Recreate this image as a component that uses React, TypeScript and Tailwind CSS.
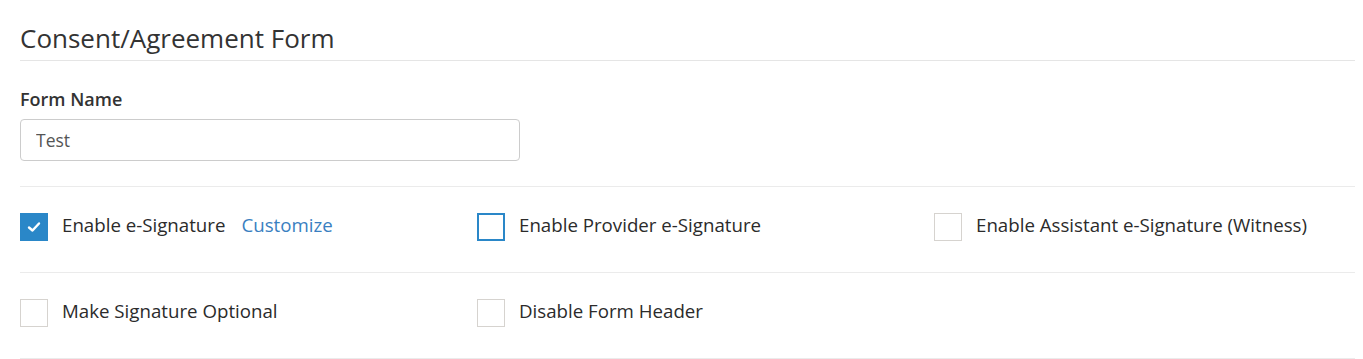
import React from 'react';

interface CheckProps {
  label: string;
  checked?: boolean;
  focused?: boolean;
  extra?: React.ReactNode;
}

const Check: React.FC<CheckProps> = ({ label, checked, focused, extra }) => {
  let box = 'border border-[#d6d3cf] bg-white';
  if (checked) box = 'bg-[#2a87c8] border border-[#2a87c8]';
  else if (focused) box = 'border-2 border-[#2a87c8] bg-white';

  return (
    <div className="w-[457px] shrink-0 flex items-start">
      <span className={`w-[28px] h-[28px] shrink-0 flex items-center justify-center ${box}`}>
        {checked && (
          <svg width="14" height="12" viewBox="0 0 14 12" fill="none">
            <path d="M2 6.5 L5.5 9.5 L12 2.5" stroke="white" strokeWidth="2.4" strokeLinecap="round" strokeLinejoin="round" />
          </svg>
        )}
      </span>
      <span className="ml-[14px] text-[18.7px] leading-[24px] text-[#2b2b2b] whitespace-nowrap">{label}</span>
      {extra}
    </div>
  );
};

export default function App() {
  return (
    <div className="bg-white w-[1363px] h-[359px] pl-5 pr-2 font-['Open_Sans',sans-serif] overflow-hidden">
      {/* Header */}
      <div className="pt-[23px] pb-[7px] border-b border-[#e5e5e5]">
        <h2 className="text-[26px] leading-[30px] text-[#333]">Consent/Agreement Form</h2>
      </div>

      {/* Form name */}
      <div className="pt-[26px] pb-[25px] border-b border-[#ebebeb]">
        <label className="block text-[18px] leading-[24px] font-semibold text-[#333] mb-[8px]">Form Name</label>
        <input
          readOnly
          value="Test"
          className="block w-[500px] h-[42px] border border-[#cccccc] rounded-[4px] px-[15px] text-[17.5px] text-[#555] outline-none"
        />
      </div>

      {/* Options row 1 */}
      <div className="h-[86px] pt-[26px] flex items-start border-b border-[#ebebeb]">
        <Check
          label="Enable e-Signature"
          checked
          extra={<a className="ml-[16px] text-[18.7px] leading-[24px] text-[#3a7fc1] cursor-pointer whitespace-nowrap">Customize</a>}
        />
        <Check label="Enable Provider e-Signature" focused />
        <Check label="Enable Assistant e-Signature (Witness)" />
      </div>

      {/* Options row 2 */}
      <div className="h-[86px] pt-[26px] flex items-start border-b border-[#ebebeb]">
        <Check label="Make Signature Optional" />
        <Check label="Disable Form Header" />
      </div>
    </div>
  );
}
